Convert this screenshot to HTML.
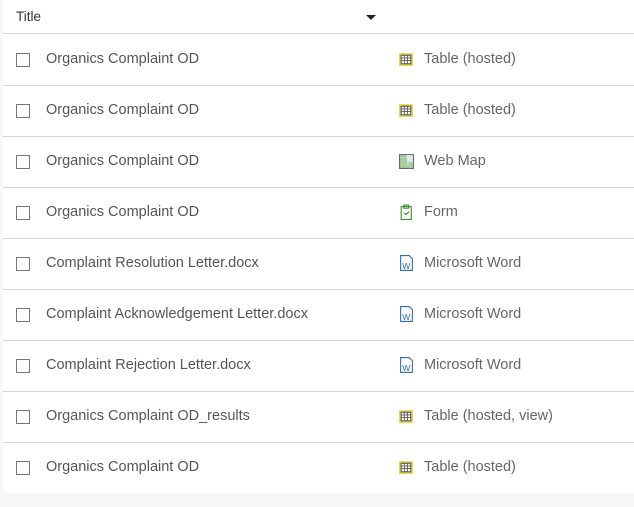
<!DOCTYPE html><html><head><style>
body{margin:0;background:#f7f7f7;font-family:"Liberation Sans",sans-serif;}
.p{position:absolute;left:3px;top:0;width:631px;height:493px;background:#fff;}
.h{position:absolute;left:13px;top:9px;font-size:13.5px;color:#333;}
.tri{position:absolute;left:363px;top:15px;width:0;height:0;border-left:5px solid transparent;border-right:5px solid transparent;border-top:5px solid #222;}
.l{position:absolute;left:0;width:631px;height:1px;background:#d6d6d6;}
.r{position:absolute;left:0;width:631px;height:50px;}
.cb{position:absolute;left:13px;top:18px;width:12px;height:12px;border:1px solid #777;}
.t{position:absolute;left:43px;top:16px;font-size:14.5px;color:#555;white-space:nowrap;}
.ic{position:absolute;left:396px;top:16px;width:15px;height:16px;}
.ty{position:absolute;left:421px;top:16px;font-size:14.5px;color:#666;white-space:nowrap;}
</style></head><body><div class="p">
<div class="h">Title</div><div class="tri"></div>
<div class="l" style="top:33px"></div>
<div id="rows"></div>
</div>
<script>
var d=[["Organics Complaint OD","t","Table (hosted)"],["Organics Complaint OD","t","Table (hosted)"],["Organics Complaint OD","m","Web Map"],["Organics Complaint OD","f","Form"],["Complaint Resolution Letter.docx","w","Microsoft Word"],["Complaint Acknowledgement Letter.docx","w","Microsoft Word"],["Complaint Rejection Letter.docx","w","Microsoft Word"],["Organics Complaint OD_results","t","Table (hosted, view)"],["Organics Complaint OD","t","Table (hosted)"]];
var ic={t:'<svg class="ic" viewBox="0 0 14 15"><rect x="0" y="2" width="13" height="12" fill="#e8d44d"/><rect x="2" y="4" width="9" height="8" fill="#fff" stroke="#555" stroke-width="1"/><path d="M2 6.5h9M2 9h9M5 4v8M8 4v8" stroke="#555" stroke-width="0.8"/></svg>',
m:'<svg class="ic" viewBox="0 0 14 15"><rect x="0.5" y="1.5" width="13" height="13" fill="#a9cf9f" stroke="#666"/><path d="M7 2h6v7c-2 0-3-2-4-1s1 3-1 4z" fill="#d8ecf0"/></svg>',
f:'<svg class="ic" viewBox="0 0 14 15"><path d="M2 2.5h9.5v12H2z M4.5 1h4.5v3H4.5z" fill="none" stroke="#3a8a2a"/><path d="M5 8.5l1.5 1.5 3-3" fill="none" stroke="#3a8a2a"/></svg>',
w:'<svg class="ic" viewBox="0 0 14 15"><path d="M1.5 0.5h8l3 3v11h-11z" fill="#fff" stroke="#2b6cb0"/><text x="3" y="13" font-size="8" fill="#2b6cb0" font-family="Liberation Sans">W</text></svg>'};
var h='';d.forEach(function(x,i){var y=35+i*51;h+='<div class="r" style="top:'+y+'px"><div class="cb"></div><div class="t">'+x[0]+'</div>'+ic[x[1]]+'<div class="ty">'+x[2]+'</div></div>';if(i<8)h+='<div class="l" style="top:'+(y+50)+'px"></div>';});
document.getElementById('rows').outerHTML=h;
</script>
</body></html>
